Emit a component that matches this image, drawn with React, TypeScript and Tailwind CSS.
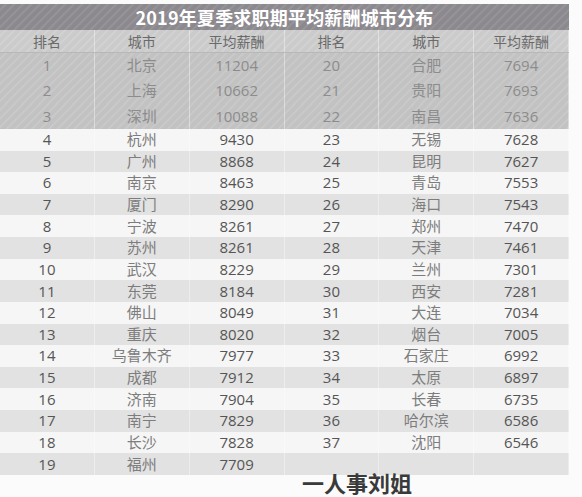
import React from "react";

const left: [string, string, string][] = [
  ["1", "北京", "11204"], ["2", "上海", "10662"], ["3", "深圳", "10088"],
  ["4", "杭州", "9430"], ["5", "广州", "8868"], ["6", "南京", "8463"],
  ["7", "厦门", "8290"], ["8", "宁波", "8261"], ["9", "苏州", "8261"],
  ["10", "武汉", "8229"], ["11", "东莞", "8184"], ["12", "佛山", "8049"],
  ["13", "重庆", "8020"], ["14", "乌鲁木齐", "7977"], ["15", "成都", "7912"],
  ["16", "济南", "7904"], ["17", "南宁", "7829"], ["18", "长沙", "7828"],
  ["19", "福州", "7709"],
];
const right: [string, string, string][] = [
  ["20", "合肥", "7694"], ["21", "贵阳", "7693"], ["22", "南昌", "7636"],
  ["23", "无锡", "7628"], ["24", "昆明", "7627"], ["25", "青岛", "7553"],
  ["26", "海口", "7543"], ["27", "郑州", "7470"], ["28", "天津", "7461"],
  ["29", "兰州", "7301"], ["30", "西安", "7281"], ["31", "大连", "7034"],
  ["32", "烟台", "7005"], ["33", "石家庄", "6992"], ["34", "太原", "6897"],
  ["35", "长春", "6735"], ["36", "哈尔滨", "6586"], ["37", "沈阳", "6546"],
  ["", "", ""],
];

const font = "font-['Open_Sans','Noto_Sans_CJK_SC',sans-serif]";

function Cell({ children, tone }: { children: React.ReactNode; tone: string }) {
  return (
    <div className={`flex items-center justify-center border-r border-white/40 ${tone}`}>
      {children}
    </div>
  );
}

export default function App() {
  return (
    <div className={`relative w-[582px] h-[497px] overflow-hidden bg-[#fbfbfb] ${font}`}>
      <div className="w-[569px] pt-[4px]">
        <div className="h-[26px] flex items-center justify-center bg-[#8e8b91] bg-[repeating-linear-gradient(135deg,#8b888e_0px,#8b888e_3px,#98959b_4px,#8d8a90_6px)]">
          <span className="text-white font-bold text-[18px] leading-none tracking-[0.2px] font-['Noto_Sans_CJK_SC',sans-serif]">
            2019年夏季求职期平均薪酬城市分布
          </span>
        </div>
        <div className="grid grid-cols-6 h-[23px] text-[14px] text-[#6a6a6a] bg-[#cdcdcd] bg-[repeating-linear-gradient(135deg,#cbcbcb_0px,#cbcbcb_3px,#d4d4d4_4px,#cbcbcb_6px)] border-b border-[#b8b8b8]">
          {["排名", "城市", "平均薪酬", "排名", "城市", "平均薪酬"].map((h, i) => (
            <Cell key={i} tone="">{h}</Cell>
          ))}
        </div>
        {left.map((l, i) => {
          const r = right[i];
          const top = i < 3;
          const bg = top
            ? "h-[25.3px] bg-[#c4c4c4] bg-[repeating-linear-gradient(135deg,#c2c2c2_0px,#c2c2c2_3px,#cbcbcb_4px,#c2c2c2_6px)] text-[#8c8c8c]"
            : i % 2 === 1
            ? "h-[21.63px] bg-[#f6f6f6]"
            : "h-[21.63px] bg-[#e2e2e2]";
          const numTone = top ? "" : "text-[#555555]";
          const cityTone = top ? "" : "text-[#7d7d7d]";
          return (
            <div key={i} className={`grid grid-cols-6 text-[15px] leading-none ${bg}`}>
              <Cell tone={numTone}>{l[0]}</Cell>
              <Cell tone={cityTone}>{l[1]}</Cell>
              <Cell tone={numTone}>{l[2]}</Cell>
              <Cell tone={numTone}>{r[0]}</Cell>
              <Cell tone={cityTone}>{r[1]}</Cell>
              <Cell tone={numTone}>{r[2]}</Cell>
            </div>
          );
        })}
      </div>
      <div className="absolute left-[302px] top-[470px] text-[22px] font-bold leading-[24px] text-[#3a3a3a] font-['Noto_Sans_CJK_SC',sans-serif]">
        一人事刘姐
      </div>
    </div>
  );
}
